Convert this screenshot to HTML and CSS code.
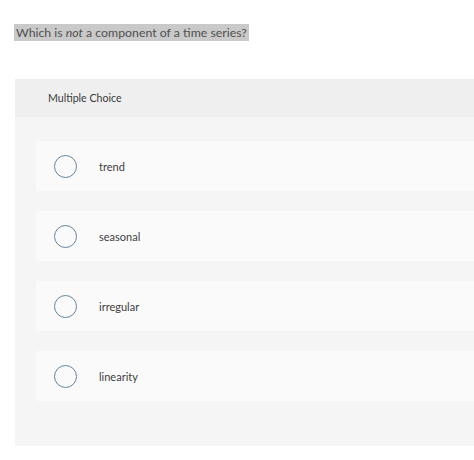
FILE: index.html
```html
<!DOCTYPE html>
<html>
<head>
<meta charset="utf-8">
<link rel="stylesheet" href="styles.css">
</head>
<body>
<div class="question"><span class="q-text">Which is <em>not</em> a component of a time series?</span></div>
<div class="panel">
  <div class="panel-header">Multiple Choice</div>
  <div class="panel-body">
    <div class="option"><span class="radio"></span><span class="label">trend</span></div>
    <div class="option"><span class="radio"></span><span class="label">seasonal</span></div>
    <div class="option"><span class="radio"></span><span class="label">irregular</span></div>
    <div class="option"><span class="radio"></span><span class="label">linearity</span></div>
  </div>
</div>
</body>
</html>
```
FILE: styles.css
```css
html, body {
  margin: 0;
  padding: 0;
  background: #ffffff;
  font-family: Lato, "Open Sans", sans-serif;
  overflow: hidden;
}
.question {
  padding: 24px 0 0 14px;
  height: 17px;
  font-size: 12.3px;
  line-height: 17px;
  color: #505050;
}
.q-text {
  background: #c9c9c9;
  padding: 0 2px 0 2px;
  display: inline-block;
}
.panel {
  margin: 38px 0 0 15px;
  width: 480px;
  background: #f5f5f5;
}
.panel-header {
  height: 38px;
  display: flex;
  align-items: center;
  padding-left: 33px;
  background: #efefef;
  font-size: 10.6px;
  color: #3a3a3a;
}
.panel-body {
  display: flex;
  flex-direction: column;
  gap: 20px;
  padding: 24px 0 45px 21px;
}
.option {
  height: 50px;
  background: #fafafa;
  display: flex;
  align-items: center;
  padding-left: 18px;
}
.radio {
  width: 21px;
  height: 21px;
  border: 1.5px solid #64849c;
  border-radius: 50%;
  flex: none;
}
.label {
  margin-left: 22px;
  font-size: 11px;
  color: #404040;
}
```
